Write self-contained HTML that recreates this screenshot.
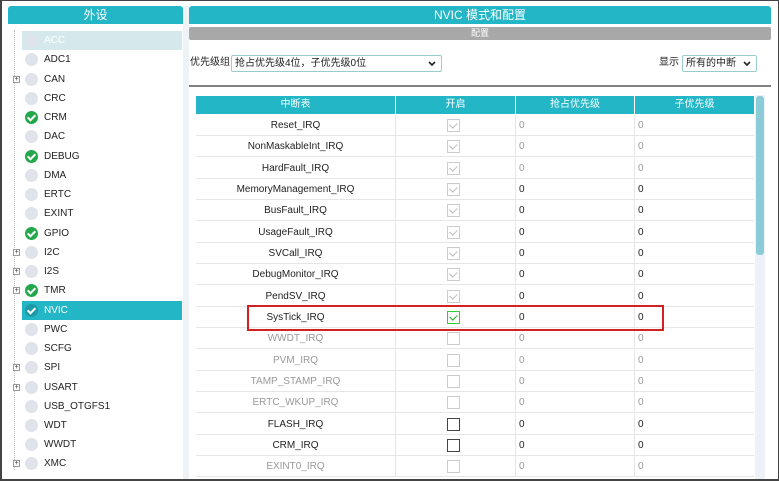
<!DOCTYPE html><html><head><meta charset="utf-8"><style>
*{margin:0;padding:0;box-sizing:border-box}
body{width:779px;height:481px;overflow:hidden;background:#fff;font-family:"Liberation Sans","Noto Sans CJK SC",sans-serif;font-size:10px;color:#222;position:relative}
.frame{position:absolute;left:0;top:0;width:779px;height:481px;border:1px solid #444;border-left-width:2px;border-bottom-width:2px}
.abs{position:absolute}
.hdr{background:#22b6c6;color:#fff;font-size:12px;font-weight:normal;text-align:center;line-height:18px;border-radius:3px 3px 0 0}
.tr{position:absolute;left:22px;width:160px;height:19px;line-height:19px}
.tr .c{position:absolute;left:3px;top:3px;width:13px;height:13px;border-radius:50%;background:#dfe3ea}
.tr .g{background:#22a84a}
.tr .c.g:after{content:"";position:absolute;left:4px;top:2px;width:3px;height:6px;border:solid #fff;border-width:0 2px 2px 0;transform:rotate(45deg)}
.tr span{position:absolute;left:22px}
.plus{position:absolute;left:-9px;top:6px;width:7px;height:7px;border:1px solid #999;background:#fff;font-size:7px;line-height:5px;text-align:center;color:#333}
.row{position:absolute;left:196px;width:558px;height:21.3px;border-bottom:1px solid #e6e6e6;line-height:21px}
.row div{position:absolute;top:0;height:21px}
.n{left:0;width:199px;text-align:center}
.e{left:199px;width:120px;border-left:1px solid #e6e6e6}
.p{left:319px;width:119px;border-left:1px solid #e6e6e6;padding-left:3px}
.s{left:438px;width:120px;border-left:1px solid #e6e6e6;padding-left:3px}
.cb{position:absolute;left:51px;top:4px;width:13px;height:13px;border:1px solid #ccc}
.cb.k:after{content:"";position:absolute;left:3px;top:1px;width:4px;height:6px;border:solid #bbb;border-width:0 1px 1px 0;transform:rotate(45deg)}
.cb.gr{border-color:#3c3;}
.cb.gr:after{border-color:#2a2}
.cb.b{border-color:#444}
.dim{color:#999}
.sel{position:absolute;height:17px;border:1px solid #9cc;border-radius:2px;padding-left:3px;line-height:15px;font-size:10px}
.sel svg{position:absolute;right:5px;top:5px}
</style></head><body>
<div class="abs hdr" style="left:8px;top:6px;width:175px">外设</div>
<div class="abs" style="left:183px;top:6px;width:6px;height:475px;background:#eef3f8"></div>
<div class="abs" style="left:14px;top:30px;height:440px;border-left:1px dotted #bbb"></div>
<div class="abs" style="left:22px;top:31px;width:160px;height:19px;background:#d5e9ec"></div>
<div class="abs" style="left:22px;top:301px;width:160px;height:19px;background:#22b6c6"></div>
<div class="tr" style="top:31px;color:#fff"><i class="c"></i><span>ACC</span></div>
<div class="tr" style="top:50px"><i class="c"></i><span>ADC1</span></div>
<div class="tr" style="top:70px"><i class="plus">+</i><i class="c"></i><span>CAN</span></div>
<div class="tr" style="top:89px"><i class="c"></i><span>CRC</span></div>
<div class="tr" style="top:108px"><i class="c g"></i><span>CRM</span></div>
<div class="tr" style="top:127px"><i class="c"></i><span>DAC</span></div>
<div class="tr" style="top:147px"><i class="c g"></i><span>DEBUG</span></div>
<div class="tr" style="top:166px"><i class="c"></i><span>DMA</span></div>
<div class="tr" style="top:185px"><i class="c"></i><span>ERTC</span></div>
<div class="tr" style="top:204px"><i class="c"></i><span>EXINT</span></div>
<div class="tr" style="top:224px"><i class="c g"></i><span>GPIO</span></div>
<div class="tr" style="top:243px"><i class="plus">+</i><i class="c"></i><span>I2C</span></div>
<div class="tr" style="top:262px"><i class="plus">+</i><i class="c"></i><span>I2S</span></div>
<div class="tr" style="top:281px"><i class="plus">+</i><i class="c g"></i><span>TMR</span></div>
<div class="tr" style="top:301px;color:#fff"><i class="c g" style="background:#1d9aa8"></i><span>NVIC</span></div>
<div class="tr" style="top:320px"><i class="c"></i><span>PWC</span></div>
<div class="tr" style="top:339px"><i class="c"></i><span>SCFG</span></div>
<div class="tr" style="top:358px"><i class="plus">+</i><i class="c"></i><span>SPI</span></div>
<div class="tr" style="top:378px"><i class="plus">+</i><i class="c"></i><span>USART</span></div>
<div class="tr" style="top:397px"><i class="c"></i><span>USB_OTGFS1</span></div>
<div class="tr" style="top:416px"><i class="c"></i><span>WDT</span></div>
<div class="tr" style="top:435px"><i class="c"></i><span>WWDT</span></div>
<div class="tr" style="top:454px"><i class="plus">+</i><i class="c"></i><span>XMC</span></div>

<div class="abs hdr" style="left:189px;top:6px;width:582px">NVIC 模式和配置</div>
<div class="abs" style="left:189px;top:27px;width:582px;height:13px;background:#a8a8a8;color:#fff;font-size:9px;text-align:center;line-height:13px;border-radius:2px">配置</div>
<div class="abs" style="left:190px;top:57px;font-size:10px;line-height:12px">优先级组</div>
<div class="sel" style="left:231px;top:55px;width:211px">抢占优先级4位，子优先级0位<svg width="8" height="6" viewBox="0 0 8 6"><path d="M1 1 L4 4 L7 1" fill="none" stroke="#222" stroke-width="1.6"/></svg></div>
<div class="abs" style="left:659px;top:57px;font-size:10px;line-height:12px">显示</div>
<div class="sel" style="left:682px;top:55px;width:75px">所有的中断<svg width="8" height="6" viewBox="0 0 8 6"><path d="M1 1 L4 4 L7 1" fill="none" stroke="#222" stroke-width="1.6"/></svg></div>
<div class="abs" style="left:189px;top:85px;width:582px;height:2px;background:#808080"></div>
<div class="abs" style="left:196px;top:96px;width:558px;height:18px;background:#22b6c6;color:#fff;line-height:18px">
<div class="abs" style="left:0;width:199px;text-align:center">中断表</div>
<div class="abs" style="left:199px;width:120px;text-align:center;border-left:1px solid #fff;height:18px">开启</div>
<div class="abs" style="left:319px;width:119px;text-align:center;border-left:1px solid #fff;height:18px">抢占优先级</div>
<div class="abs" style="left:438px;width:120px;text-align:center;border-left:1px solid #fff;height:18px">子优先级</div></div>
<div class="abs" style="left:755px;top:95px;width:10px;height:386px;background:#eef2f8"></div>
<div class="abs" style="left:756px;top:96px;width:8px;height:159px;background:#8ccbd8;border-radius:3px"></div>

<div class="row" style="top:115px"><div class="n">Reset_IRQ</div><div class="e"><i class="cb k"></i></div><div class="p dim">0</div><div class="s dim">0</div></div>
<div class="row" style="top:136px"><div class="n">NonMaskableInt_IRQ</div><div class="e"><i class="cb k"></i></div><div class="p dim">0</div><div class="s dim">0</div></div>
<div class="row" style="top:158px"><div class="n">HardFault_IRQ</div><div class="e"><i class="cb k"></i></div><div class="p dim">0</div><div class="s dim">0</div></div>
<div class="row" style="top:179px"><div class="n">MemoryManagement_IRQ</div><div class="e"><i class="cb k"></i></div><div class="p">0</div><div class="s">0</div></div>
<div class="row" style="top:200px"><div class="n">BusFault_IRQ</div><div class="e"><i class="cb k"></i></div><div class="p">0</div><div class="s">0</div></div>
<div class="row" style="top:222px"><div class="n">UsageFault_IRQ</div><div class="e"><i class="cb k"></i></div><div class="p">0</div><div class="s">0</div></div>
<div class="row" style="top:243px"><div class="n">SVCall_IRQ</div><div class="e"><i class="cb k"></i></div><div class="p">0</div><div class="s">0</div></div>
<div class="row" style="top:264px"><div class="n">DebugMonitor_IRQ</div><div class="e"><i class="cb k"></i></div><div class="p">0</div><div class="s">0</div></div>
<div class="row" style="top:286px"><div class="n">PendSV_IRQ</div><div class="e"><i class="cb k"></i></div><div class="p">0</div><div class="s">0</div></div>
<div class="row" style="top:307px"><div class="n">SysTick_IRQ</div><div class="e"><i class="cb k gr"></i></div><div class="p">0</div><div class="s">0</div></div>
<div class="row dim" style="top:328px"><div class="n">WWDT_IRQ</div><div class="e"><i class="cb"></i></div><div class="p">0</div><div class="s">0</div></div>
<div class="row dim" style="top:350px"><div class="n">PVM_IRQ</div><div class="e"><i class="cb"></i></div><div class="p">0</div><div class="s">0</div></div>
<div class="row dim" style="top:371px"><div class="n">TAMP_STAMP_IRQ</div><div class="e"><i class="cb"></i></div><div class="p">0</div><div class="s">0</div></div>
<div class="row dim" style="top:392px"><div class="n">ERTC_WKUP_IRQ</div><div class="e"><i class="cb"></i></div><div class="p">0</div><div class="s">0</div></div>
<div class="row" style="top:414px"><div class="n">FLASH_IRQ</div><div class="e"><i class="cb b"></i></div><div class="p">0</div><div class="s">0</div></div>
<div class="row" style="top:435px"><div class="n">CRM_IRQ</div><div class="e"><i class="cb b"></i></div><div class="p">0</div><div class="s">0</div></div>
<div class="row dim" style="top:456px"><div class="n">EXINT0_IRQ</div><div class="e"><i class="cb"></i></div><div class="p">0</div><div class="s">0</div></div>
<div class="abs" style="left:247px;top:305px;width:417px;height:26px;border:2px solid #d42020"></div>
<div class="frame"></div>
</body></html>
